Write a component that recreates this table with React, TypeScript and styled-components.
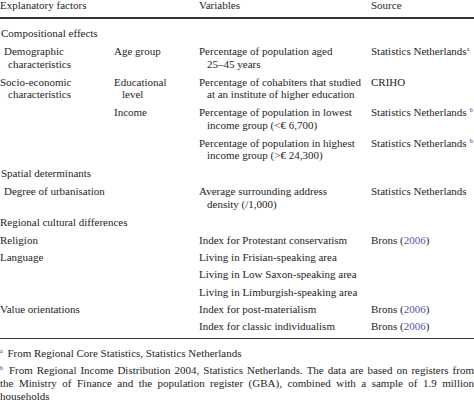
import React from 'react';
import styled, { createGlobalStyle } from 'styled-components';

const GlobalStyle = createGlobalStyle`
    html, body {
        margin: 0;
        padding: 0;
        background: #FFFFFF;
    }
    body {
        font-family: "Liberation Serif", "Times New Roman", serif;
        font-size: 11px;
        color: #252525;
        overflow: hidden;
    }
    table {
        font: inherit;
        color: inherit;
    }
`;

const Page = styled.div`
    width: 474px;
    height: 405px;
    overflow: hidden;
`;

const Table = styled.table`
    width: 474px;
    margin-top: -1px;
    border-collapse: collapse;
    table-layout: fixed;
    font-family: "Liberation Serif", "Times New Roman", serif;
    font-size: 11px;
    line-height: 12.5px;
`;

const HeadCell = styled.th`
    text-align: left;
    font-weight: normal;
    vertical-align: top;
    padding: 0 0 5.5px 0;
    border-bottom: 2px solid #333333;
    white-space: nowrap;
`;

// tight rows sit a little closer together, the last one closes the table
const Row = styled.tr<{ $tight?: boolean; $last?: boolean }>`
    border-bottom: ${p => (p.$last ? '1.5px solid #3a3a3a' : 'none')};
    & > td {
        padding-bottom: ${p => (p.$last ? 5.5 : p.$tight ? 2.4 : 3)}px;
    }
`;

const Cell = styled.td<{ $indent?: number; $top?: number }>`
    vertical-align: top;
    white-space: nowrap;
    padding: ${p => p.$top ?? 2.5}px 0 3px ${p => p.$indent ?? 0}px;
`;

const Wrap = styled.span<{ $indent?: number }>`
    display: block;
    padding-left: ${p => p.$indent ?? 8}px;
`;

const Sup = styled.sup<{ $gap?: boolean }>`
    font-size: 6px;
    line-height: 0;
    vertical-align: 4px;
    margin-left: ${p => (p.$gap ? '3px' : '0')};
`;

const Link = styled.span`
    color: #5456a8;
`;

const Notes = styled.div`
    padding-top: 8px;
    line-height: 13px;
`;

const Note = styled.p`
    margin: 0 0 4px 0;
`;

const Justified = styled.span<{ $last?: boolean }>`
    display: block;
    text-align: ${p => (p.$last ? 'left' : 'justify')};
    text-align-last: ${p => (p.$last ? 'left' : 'justify')};
    white-space: ${p => (p.$last ? 'nowrap' : 'normal')};
`;

const NoteMark = styled.sup`
    font-size: 6px;
    line-height: 0;
    vertical-align: 4px;
    margin-right: 2px;
`;

const Brons = () => (
    <>
        Brons (<Link>2006</Link>)
    </>
);

function App() {
    return (
        <Page>
            <GlobalStyle />
            <Table>
                <colgroup>
                    <col style={{ width: 114 }} />
                    <col style={{ width: 85 }} />
                    <col style={{ width: 172 }} />
                    <col style={{ width: 103 }} />
                </colgroup>
                <thead>
                    <tr>
                        <HeadCell>Explanatory factors</HeadCell>
                        <HeadCell />
                        <HeadCell>Variables</HeadCell>
                        <HeadCell>Source</HeadCell>
                    </tr>
                </thead>
                <tbody>
                    <Row>
                        <Cell colSpan={4} $indent={1} $top={8}>Compositional effects</Cell>
                    </Row>
                    <Row>
                        <Cell $indent={4}>Demographic<Wrap $indent={4}>characteristics</Wrap></Cell>
                        <Cell>Age group</Cell>
                        <Cell>Percentage of population aged<Wrap>25–45 years</Wrap></Cell>
                        <Cell>Statistics Netherlands<Sup>a</Sup></Cell>
                    </Row>
                    <Row>
                        <Cell>Socio-economic<Wrap>characteristics</Wrap></Cell>
                        <Cell>Educational<Wrap>level</Wrap></Cell>
                        <Cell>Percentage of cohabiters that studied<Wrap>at an institute of higher education</Wrap></Cell>
                        <Cell>CRIHO</Cell>
                    </Row>
                    <Row>
                        <Cell />
                        <Cell>Income</Cell>
                        <Cell>Percentage of population in lowest<Wrap>income group (&lt;€ 6,700)</Wrap></Cell>
                        <Cell>Statistics Netherlands<Sup $gap>b</Sup></Cell>
                    </Row>
                    <Row>
                        <Cell />
                        <Cell />
                        <Cell>Percentage of population in highest<Wrap>income group (&gt;€ 24,300)</Wrap></Cell>
                        <Cell>Statistics Netherlands<Sup $gap>b</Sup></Cell>
                    </Row>
                    <Row>
                        <Cell colSpan={4} $indent={1}>Spatial determinants</Cell>
                    </Row>
                    <Row>
                        <Cell colSpan={2} $indent={4}>Degree of urbanisation</Cell>
                        <Cell>Average surrounding address<Wrap>density (/1,000)</Wrap></Cell>
                        <Cell>Statistics Netherlands</Cell>
                    </Row>
                    <Row>
                        <Cell colSpan={4}>Regional cultural differences</Cell>
                    </Row>
                    <Row $tight>
                        <Cell colSpan={2}>Religion</Cell>
                        <Cell>Index for Protestant conservatism</Cell>
                        <Cell><Brons /></Cell>
                    </Row>
                    <Row $tight>
                        <Cell colSpan={2}>Language</Cell>
                        <Cell>Living in Frisian-speaking area</Cell>
                        <Cell />
                    </Row>
                    <Row $tight>
                        <Cell colSpan={2} />
                        <Cell>Living in Low Saxon-speaking area</Cell>
                        <Cell />
                    </Row>
                    <Row $tight>
                        <Cell colSpan={2} />
                        <Cell>Living in Limburgish-speaking area</Cell>
                        <Cell />
                    </Row>
                    <Row $tight>
                        <Cell colSpan={2}>Value orientations</Cell>
                        <Cell>Index for post-materialism</Cell>
                        <Cell><Brons /></Cell>
                    </Row>
                    <Row $last>
                        <Cell colSpan={2} />
                        <Cell>Index for classic individualism</Cell>
                        <Cell><Brons /></Cell>
                    </Row>
                </tbody>
            </Table>
            <Notes>
                <Note>
                    <NoteMark>a</NoteMark> From Regional Core Statistics, Statistics Netherlands
                </Note>
                <Note>
                    <Justified>
                        <NoteMark>b</NoteMark> From Regional Income Distribution 2004, Statistics Netherlands. The data are based on registers from
                    </Justified>
                    <Justified>
                        the Ministry of Finance and the population register (GBA), combined with a sample of 1.9 million
                    </Justified>
                    <Justified $last>households</Justified>
                </Note>
            </Notes>
        </Page>
    );
}

export default App;
